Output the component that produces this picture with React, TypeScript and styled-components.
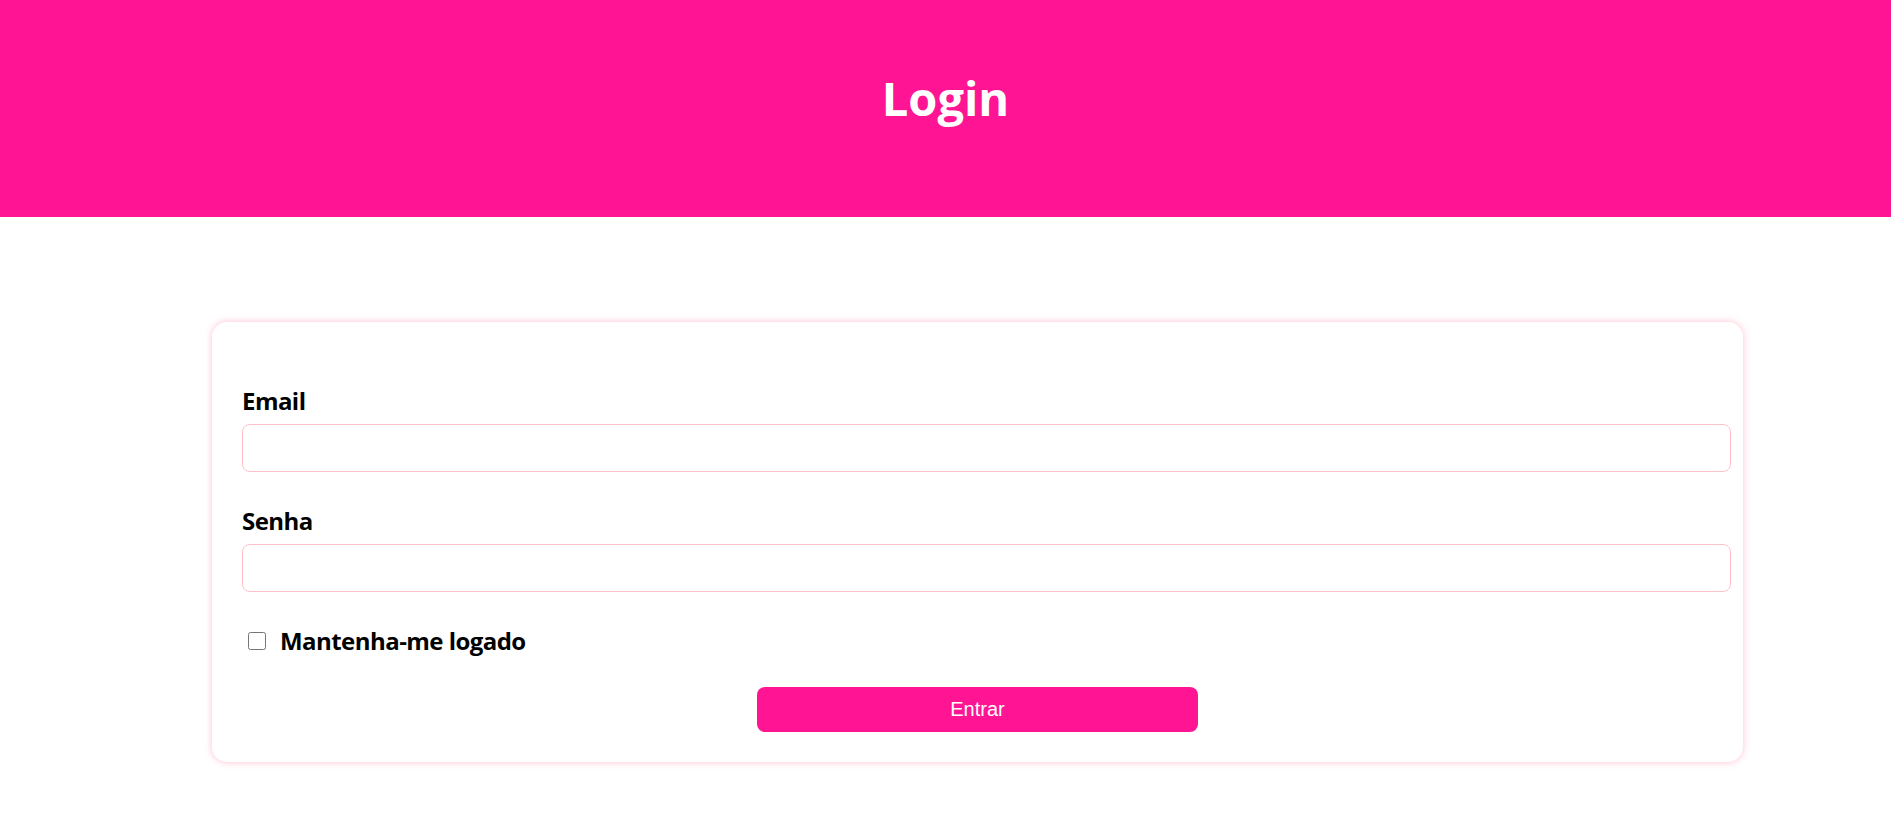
import React from "react";
import styled, { createGlobalStyle } from "styled-components";

const GlobalStyle = createGlobalStyle`
  * {
    box-sizing: border-box;
  }
  body {
    margin: 0;
    background: #ffffff;
    font-family: "Open Sans", "Noto Sans", sans-serif;
  }
`;

export default function App() {
  return (
    <>
      <GlobalStyle />
      <SHeader>
        <STitle>Login</STitle>
      </SHeader>

      <SMain>
        <SCard>
          <SField>
            <SLabel htmlFor="email">Email</SLabel>
            <SInput id="email" type="email" />
          </SField>

          <SField>
            <SLabel htmlFor="senha">Senha</SLabel>
            <SInput id="senha" type="password" />
          </SField>

          <SCheckRow>
            <SCheckbox type="checkbox" id="lembrar" />
            <SLabel htmlFor="lembrar">Mantenha-me logado</SLabel>
          </SCheckRow>

          <SButton type="button">Entrar</SButton>
        </SCard>
      </SMain>
    </>
  );
}

const SHeader = styled.header`
  height: 217px;
  padding-top: 68px;
  background: #ff1493;
  text-align: center;
`;

const STitle = styled.h1`
  margin: 0;
  color: #ffffff;
  font-size: 47px;
  font-weight: 700;
  line-height: 61px;
`;

const SMain = styled.main`
  padding: 105px 148px 60px 212px;
`;

const SCard = styled.form`
  display: flex;
  flex-direction: column;
  padding: 0 30px 30px 30px;
  background: #ffffff;
  border-radius: 15px;
  box-shadow: 0 0 7px rgba(255, 170, 190, 0.75);
`;

const SField = styled.div`
  display: flex;
  flex-direction: column;
  gap: 7px;
  margin-top: 63px;

  & + & {
    margin-top: 33px;
  }
`;

const SLabel = styled.label`
  color: #000000;
  font-size: 24px;
  font-weight: 700;
  line-height: 32px;
  letter-spacing: -0.55px;
`;

const SInput = styled.input`
  box-sizing: content-box;
  width: 100%;
  height: 46px;
  padding: 0 8px;
  border: 1px solid #ffc0cb;
  border-radius: 8px;
  outline: none;
  font-size: 18px;
  margin: 0;
`;

const SCheckRow = styled.div`
  display: flex;
  align-items: center;
  gap: 14px;
  margin-top: 33px;
  padding-left: 6px;
`;

const SCheckbox = styled.input`
  width: 18px;
  height: 18px;
  margin: 0;
`;

const SButton = styled.button`
  align-self: center;
  width: 30%;
  height: 45px;
  margin-top: 30px;
  border: none;
  border-radius: 8px;
  background: #ff1493;
  color: #ffffff;
  font-family: "Liberation Sans", Arial, sans-serif;
  font-size: 20px;
  cursor: pointer;
`;
